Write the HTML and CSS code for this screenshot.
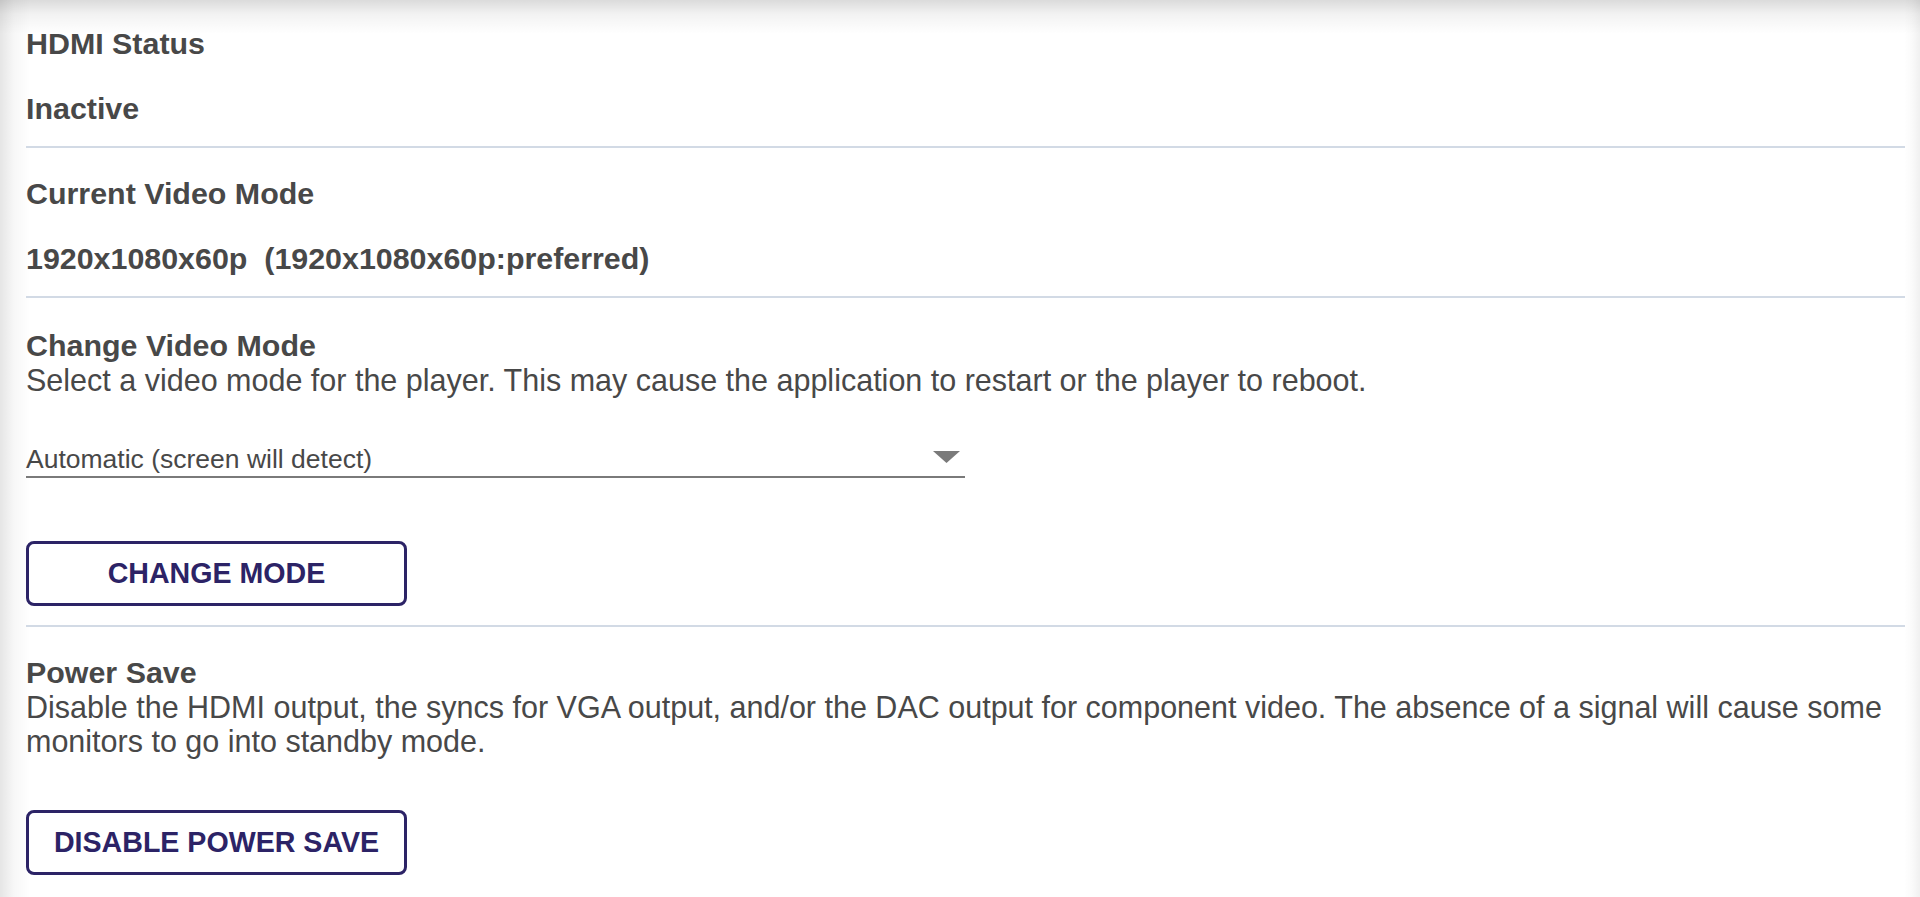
FILE: index.html
```html
<!DOCTYPE html>
<html lang="en">
<head>
<meta charset="utf-8">
<title>Video Settings</title>
<link rel="stylesheet" href="styles.css">
</head>
<body>
<div class="page">
  <section class="section first">
    <div class="title">HDMI Status</div>
    <div class="value">Inactive</div>
  </section>
  <section class="section">
    <div class="title">Current Video Mode</div>
    <div class="value">1920x1080x60p&nbsp; (1920x1080x60p:preferred)</div>
  </section>
  <section class="section mode">
    <div class="title">Change Video Mode</div>
    <div class="desc">Select a video mode for the player. This may cause the application to restart or the player to reboot.</div>
    <div class="select">
      <span class="select-text">Automatic (screen will detect)</span>
      <svg class="caret" width="27" height="12" viewBox="0 0 27 12"><polygon points="0,0 27,0 13.5,12" fill="#7a7a7a"/></svg>
    </div>
    <button class="btn btn-mode">CHANGE MODE</button>
  </section>
  <section class="section power">
    <div class="title">Power Save</div>
    <div class="desc">Disable the HDMI output, the syncs for VGA output, and/or the DAC output for component video. The absence of a signal will cause some monitors to go into standby mode.</div>
    <button class="btn btn-power">DISABLE POWER SAVE</button>
  </section>
</div>
</body>
</html>
```
FILE: styles.css
```css
html, body {
  margin: 0;
  padding: 0;
  height: 100%;
}
body {
  font-family: "Liberation Sans", Arial, Helvetica, sans-serif;
  color: #484848;
  background: #fff;
  overflow: hidden;
}
.page {
  min-height: 100vh;
  box-sizing: border-box;
  padding: 0 15px 0 26px;
  background:
    linear-gradient(to bottom, rgba(0,0,0,0.14) 0, rgba(0,0,0,0.05) 14px, rgba(0,0,0,0) 34px),
    linear-gradient(to right, rgba(0,0,0,0.10) 0, rgba(0,0,0,0.03) 14px, rgba(0,0,0,0) 30px),
    linear-gradient(to left, rgba(0,0,0,0.06) 0, rgba(0,0,0,0.02) 8px, rgba(0,0,0,0) 16px),
    #fff;
}
.section {
  padding: 28px 0 20px;
  border-bottom: 2px solid #d2dae5;
}
.section.first {
  padding-top: 26px;
}
.section.power {
  border-bottom: none;
}
.title {
  font-size: 30.4px;
  font-weight: bold;
  line-height: 35px;
}
.value {
  font-size: 30.4px;
  font-weight: bold;
  line-height: 35px;
  margin-top: 30px;
  white-space: pre;
}
.desc {
  font-size: 30.5px;
  line-height: 34px;
}
.mode {
  padding-top: 30px;
  padding-bottom: 19px;
}
.select {
  display: flex;
  align-items: center;
  justify-content: space-between;
  width: 939px;
  box-sizing: border-box;
  margin-top: 47px;
  padding: 0 5px 2px 0;
  border-bottom: 2px solid #7a7a7a;
}
.select-text {
  font-size: 26.5px;
  line-height: 30px;
  color: #484848;
}
.caret {
  display: block;
  margin-top: -4px;
}
.btn {
  display: block;
  width: 381px;
  height: 65px;
  box-sizing: border-box;
  border: 3px solid #2c2366;
  border-radius: 8px;
  background: #fff;
  color: #2c2366;
  font-family: "Liberation Sans", Arial, Helvetica, sans-serif;
  font-size: 28.6px;
  font-weight: bold;
  padding: 0;
  text-align: center;
}
.btn-mode {
  margin-top: 63px;
}
.power {
  padding-top: 28px;
}
.btn-power {
  margin-top: 52px;
}
```
